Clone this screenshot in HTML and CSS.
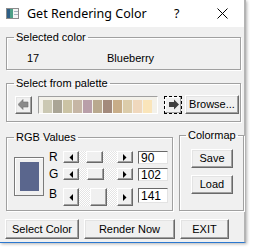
FILE: index.html
```html
<!DOCTYPE html>
<html>
<head>
<meta charset="utf-8">
<link rel="stylesheet" href="styles.css">
</head>
<body>
<div class="window">
  <div class="titlebar">
    <svg class="appicon" width="13" height="11" viewBox="0 0 13 11">
      <rect x="0.5" y="0.5" width="12" height="10" fill="#f4f4f4" stroke="#8c8c8c"/>
      <rect x="1" y="1" width="3" height="9" fill="#2e5f86"/>
      <rect x="4" y="1" width="3" height="9" fill="#4d9f86"/>
      <rect x="8" y="3" width="4" height="1" fill="#a8b4c0"/>
      <rect x="8" y="6" width="4" height="1" fill="#a8b4c0"/>
    </svg>
    <span class="title">Get Rendering Color</span>
    <span class="help">?</span>
    <svg class="close" width="11" height="11" viewBox="0 0 11 11">
      <path d="M0.5 0.5 L10.5 10.5 M10.5 0.5 L0.5 10.5" stroke="#000" stroke-width="1"/>
    </svg>
  </div>
  <div class="client">
    <fieldset class="group g-selected">
      <legend>Selected color</legend>
      <div class="sel-row"><span class="sel-num">17</span><span class="sel-name">Blueberry</span></div>
    </fieldset>

    <fieldset class="group g-palette">
      <legend>Select from palette</legend>
      <div class="pal-row">
        <button class="btn palbtn">
          <svg width="11" height="11" viewBox="0 0 11 11"><polygon points="0,5.5 5,0.5 5,3 10,3 10,8 5,8 5,10.5" fill="#8a8a8a" stroke="#6e6e6e" stroke-width="0.6"/></svg>
        </button>
        <div class="strip">
          <span class="sw" style="background:#cbc8b3"></span>
          <span class="sw" style="background:#aaa596"></span>
          <span class="sw" style="background:#cbc3a4"></span>
          <span class="sw" style="background:#c6b6a5"></span>
          <span class="sw" style="background:#b99fa9"></span>
          <span class="sw" style="background:#b9a98e"></span>
          <span class="sw" style="background:#a38a7c"></span>
          <span class="sw" style="background:#c8ad88"></span>
          <span class="sw" style="background:#dcccaa"></span>
          <span class="sw" style="background:#f0d8bd"></span>
          <span class="sw" style="background:#fae5ba"></span>
        </div>
        <button class="btn palbtn focused">
          <svg width="11" height="11" viewBox="0 0 11 11"><polygon points="11,5.5 6,0.5 6,3 1,3 1,8 6,8 6,10.5" fill="#404040"/></svg>
        </button>
        <button class="btn browse">Browse...</button>
      </div>
    </fieldset>

    <div class="mid">
      <fieldset class="group g-rgb">
        <legend>RGB Values</legend>
        <div class="rgb-body">
          <div class="preview"><div class="preview-fill" style="background:rgb(90,102,141)"></div></div>
          <div class="rows">
            <div class="row">
              <span class="lbl">R</span>
              <div class="scroll">
                <span class="sbtn"><svg width="4" height="7" viewBox="0 0 4 7"><polygon points="4,0 4,7 0.5,3.5" fill="#000"/></svg></span>
                <span class="track"><span class="thumb" style="margin-left:7px"></span></span>
                <span class="sbtn"><svg width="4" height="7" viewBox="0 0 4 7"><polygon points="0,0 0,7 3.5,3.5" fill="#000"/></svg></span>
              </div>
              <span class="edit">90</span>
            </div>
            <div class="row">
              <span class="lbl">G</span>
              <div class="scroll">
                <span class="sbtn"><svg width="4" height="7" viewBox="0 0 4 7"><polygon points="4,0 4,7 0.5,3.5" fill="#000"/></svg></span>
                <span class="track"><span class="thumb" style="margin-left:8px"></span></span>
                <span class="sbtn"><svg width="4" height="7" viewBox="0 0 4 7"><polygon points="0,0 0,7 3.5,3.5" fill="#000"/></svg></span>
              </div>
              <span class="edit">102</span>
            </div>
            <div class="row row-tall">
              <span class="lbl">B</span>
              <div class="scroll">
                <span class="sbtn"><svg width="4" height="7" viewBox="0 0 4 7"><polygon points="4,0 4,7 0.5,3.5" fill="#000"/></svg></span>
                <span class="track"><span class="thumb" style="margin-left:11px"></span></span>
                <span class="sbtn"><svg width="4" height="7" viewBox="0 0 4 7"><polygon points="0,0 0,7 3.5,3.5" fill="#000"/></svg></span>
              </div>
              <span class="edit">141</span>
            </div>
          </div>
        </div>
      </fieldset>
      <fieldset class="group g-cmap">
        <legend>Colormap</legend>
        <div class="cmap-body">
          <button class="btn cbtn">Save</button>
          <button class="btn cbtn">Load</button>
        </div>
      </fieldset>
    </div>

    <div class="actions">
      <button class="btn act a-select">Select Color</button>
      <button class="btn act a-render">Render Now</button>
      <button class="btn act a-exit">EXIT</button>
    </div>
  </div>
</div>
</body>
</html>
```
FILE: styles.css
```css
* { box-sizing: border-box; }
html, body { margin: 0; padding: 0; background: #fff; }
body {
  font-family: "Liberation Sans", Arial, sans-serif;
  font-size: 11px;
  color: #000;
  width: 254px;
  height: 252px;
  overflow: hidden;
}
.window {
  width: 246px;
  height: 243px;
  background: #f0f0f0;
  border-bottom: 1px solid #2b78d0;
  border-right: 2px solid #b4b4b4;
  box-shadow: 1px 1px 3px rgba(0,0,0,0.3);
  display: flex;
  flex-direction: column;
}
.titlebar {
  height: 27px;
  background: #fff;
  display: flex;
  align-items: center;
  flex: none;
}
.appicon { margin-left: 6px; flex: none; }
.title {
  margin-left: 8px;
  font-family: "Noto Sans", "Open Sans", sans-serif;
  font-size: 12.5px;
  flex: 1;
}
.help {
  font-family: "Noto Sans", "Open Sans", sans-serif;
  font-size: 12.5px;
  width: 7px;
}
.close { margin-left: 36px; margin-right: 16px; flex: none; }

.client {
  flex: 1;
  padding-left: 6px;
  display: flex;
  flex-direction: column;
}

.group {
  margin: 0;
  padding: 0;
  min-width: 0;
  border: 1px solid #a0a0a0;
  box-shadow: inset 1px 1px 0 #fff, 1px 1px 0 #fff;
}
.group legend {
  padding: 0 2px;
  margin-left: 7px;
  font-size: 11px;
  line-height: 13px;
}

.g-selected { margin-top: 4px; width: 235px; height: 39px; }
.sel-row { display: flex; padding: 8px 0 0 20px; line-height: 13px; }
.sel-num { width: 80px; }

.g-palette { margin-top: 7px; width: 235px; height: 45px; }
.pal-row { display: flex; align-items: center; padding: 5px 0 0 8px; height: 24px; }

.btn {
  font-family: "Liberation Sans", Arial, sans-serif;
  font-size: 11px;
  color: #000;
  background: #f0f0f0;
  margin: 0;
  padding: 0;
  border: 1px solid;
  border-color: #fff #696969 #696969 #fff;
  box-shadow: inset -1px -1px 0 #a0a0a0, inset 1px 1px 0 #e3e3e3;
  display: flex;
  align-items: center;
  justify-content: center;
  line-height: 13px;
}
.palbtn { width: 17px; height: 18px; flex: none; }
.palbtn.focused { width: 18px; margin-left: 6px; border: 1px dashed #000; box-shadow: inset -1px -1px 0 #a0a0a0, inset 1px 1px 0 #fff; }
.strip {
  margin-left: 6px;
  width: 120px;
  height: 18px;
  flex: none;
  border: 1px solid;
  border-color: #a0a0a0 #fff #fff #a0a0a0;
  background: #f3f1ea;
  display: flex;
  gap: 1px;
  padding: 3px 0 0 4px;
}
.sw { width: 9px; height: 13px; flex: none; }
.browse { margin-left: 3px; width: 54px; height: 19px; flex: none; }

.mid { margin-top: 7px; display: flex; gap: 6px; align-items: flex-start; }
.g-rgb { margin-top: 2px; width: 167px; height: 80px; }
.g-cmap { width: 65px; height: 82px; }
.g-cmap legend { margin-left: 6px; }

.rgb-body { display: flex; padding-left: 7px; }
.preview {
  margin-top: 13px;
  width: 30px;
  height: 39px;
  flex: none;
  border: 1px solid #7a7a7a;
  box-shadow: inset 1px 1px 0 #fff;
  padding: 4px 0 0 5px;
}
.preview-fill { width: 19px; height: 29px; }
.rows { margin-left: 5px; padding-top: 7px; display: flex; flex-direction: column; }
.row { display: flex; align-items: flex-start; height: 12px; margin-bottom: 5px; }
.row-tall { height: 18px; margin-top: 3px; }
.lbl { width: 14px; line-height: 13px; font-size: 12px; }
.scroll { width: 70px; height: 100%; display: flex; flex: none; }
.sbtn {
  width: 16px;
  height: 100%;
  flex: none;
  background: #f0f0f0;
  border: 1px solid;
  border-color: #fff #696969 #696969 #fff;
  box-shadow: inset -1px -1px 0 #a0a0a0;
  display: flex;
  align-items: center;
  justify-content: center;
}
.track {
  flex: 1;
  height: 100%;
  display: flex;
  background: repeating-conic-gradient(#ffffff 0 25%, #e4e4e4 0 50%) 0 0 / 2px 2px;
}
.thumb {
  width: 17px;
  height: 100%;
  background: #f0f0f0;
  border: 1px solid;
  border-color: #fff #696969 #696969 #fff;
  box-shadow: inset -1px -1px 0 #a0a0a0;
}
.edit {
  margin-left: 5px;
  width: 30px;
  height: 13px;
  background: #fff;
  border: 1px solid;
  border-color: #696969 #e3e3e3 #e3e3e3 #696969;
  padding-left: 2px;
  font-size: 12px;
  line-height: 12px;
}
.row-tall .edit { height: 15px; line-height: 14px; }

.cmap-body { display: flex; flex-direction: column; gap: 7px; padding: 7px 0 0 11px; }
.cbtn { width: 42px; height: 19px; }

.actions { margin-top: 8px; margin-left: -1px; display: flex; gap: 5px; }
.act { height: 20px; }
.a-select { width: 74px; }
.a-render { width: 91px; }
.a-exit { width: 49px; }
```
